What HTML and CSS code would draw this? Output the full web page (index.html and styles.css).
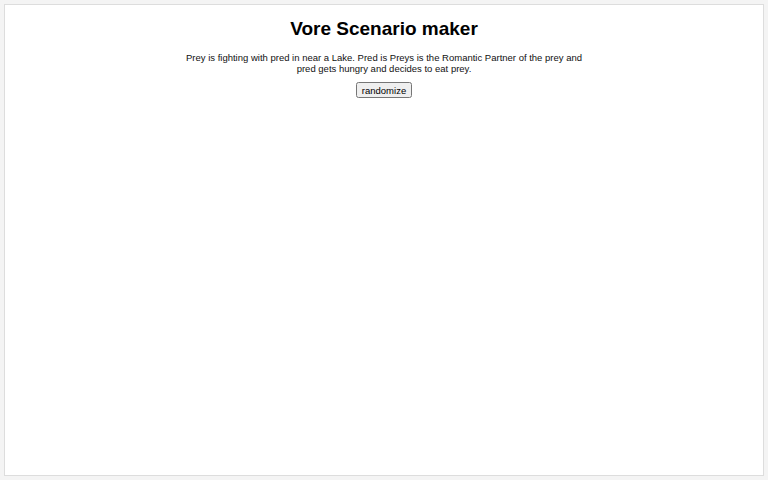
FILE: index.html
```html
<!DOCTYPE html>
<html lang="en">
<head>
    <meta charset="UTF-8">
    <meta name="viewport" content="width=device-width, initial-scale=1.0">
    <title>Vore Scenario maker</title>
    <link rel="stylesheet" href="styles.css">
</head>
<body>
    <div class="container">
        <h1>Vore Scenario maker</h1>
        <p id="scenario" class="scenario">Prey is fighting with pred in near a Lake. Pred is Preys is the Romantic Partner of the prey and pred gets hungry and decides to eat prey.</p>
        <button class="button" id="randomize">randomize</button>
    </div>
</body>
</html>
```

FILE: styles.css
```css
html, body {
    height: 100%;
}

body {
    font-family: 'Liberation Sans', Arial, sans-serif;
    background-color: #f4f4f4;
    margin: 0;
    padding: 4px;
    box-sizing: border-box;
}

.container {
    background-color: white;
    border: 1px solid #dddddd;
    height: 100%;
    box-sizing: border-box;
    text-align: center;
    padding-top: 13px;
}

h1 {
    font-size: 19px;
    color: #000;
    margin: 0 0 12px 0;
}

.scenario {
    font-size: 9.5px;
    line-height: 11px;
    color: #111;
    max-width: 402px;
    margin: 0 auto 6px auto;
}

.button {
    font-family: 'Liberation Sans', Arial, sans-serif;
    font-size: 9.5px;
    padding: 1px 4px;
    height: 16px;
    line-height: 12px;
}
```
